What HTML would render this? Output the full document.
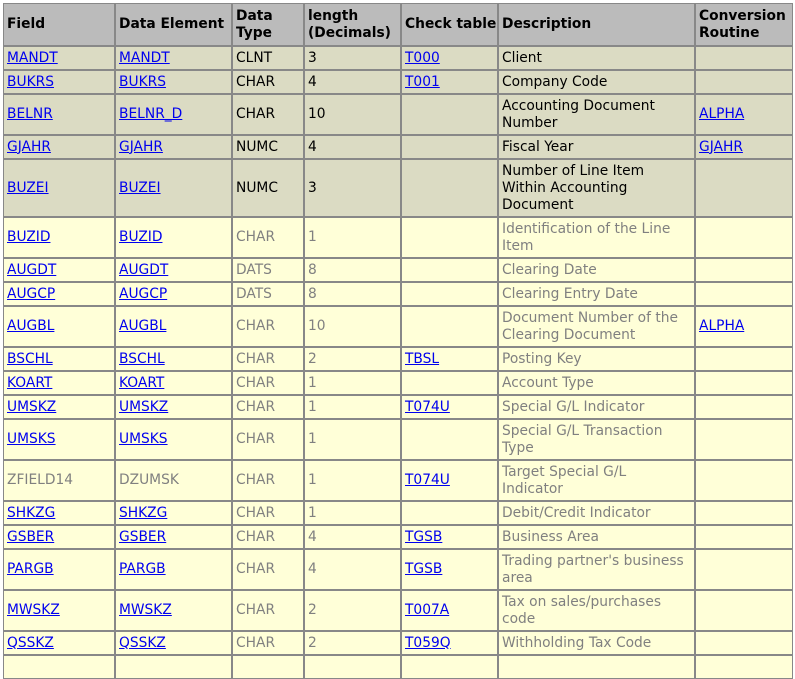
<!DOCTYPE html>
<html><head><meta charset="utf-8"><style>
body{margin:0;padding:3px 0 0 3px;background:#fff;font-family:Verdana,"DejaVu Sans",sans-serif;font-size:13.8px;}
table{border-collapse:separate;border-spacing:0;table-layout:fixed;width:790px;}
td,th{border:1px solid #888;padding:0 3px;text-align:left;vertical-align:middle;line-height:17px;white-space:nowrap;overflow:hidden;}
th{background:#bbb;font-weight:bold;color:#000;}
tr.k td{background:#dbdbc3;color:#000;}
tr.n td{background:#ffffd8;color:#808080;}
a{color:#0000ee;text-decoration:underline;}
</style></head><body>
<table>
<colgroup><col style="width:112px"><col style="width:117px"><col style="width:72px"><col style="width:97px"><col style="width:97px"><col style="width:197px"><col style="width:98px"></colgroup>
<tr style="height:43px"><th>Field</th><th>Data Element</th><th>Data<br>Type</th><th>length<br>(Decimals)</th><th>Check table</th><th>Description</th><th>Conversion<br>Routine</th></tr>
<tr class="k" style="height:24px"><td><a>MANDT</a></td><td><a>MANDT</a></td><td>CLNT</td><td>3</td><td><a>T000</a></td><td>Client</td><td></td></tr>
<tr class="k" style="height:24px"><td><a>BUKRS</a></td><td><a>BUKRS</a></td><td>CHAR</td><td>4</td><td><a>T001</a></td><td>Company Code</td><td></td></tr>
<tr class="k" style="height:41px"><td><a>BELNR</a></td><td><a>BELNR_D</a></td><td>CHAR</td><td>10</td><td></td><td>Accounting Document<br>Number</td><td><a>ALPHA</a></td></tr>
<tr class="k" style="height:24px"><td><a>GJAHR</a></td><td><a>GJAHR</a></td><td>NUMC</td><td>4</td><td></td><td>Fiscal Year</td><td><a>GJAHR</a></td></tr>
<tr class="k" style="height:58px"><td><a>BUZEI</a></td><td><a>BUZEI</a></td><td>NUMC</td><td>3</td><td></td><td>Number of Line Item<br>Within Accounting<br>Document</td><td></td></tr>
<tr class="n" style="height:41px"><td><a>BUZID</a></td><td><a>BUZID</a></td><td>CHAR</td><td>1</td><td></td><td>Identification of the Line<br>Item</td><td></td></tr>
<tr class="n" style="height:24px"><td><a>AUGDT</a></td><td><a>AUGDT</a></td><td>DATS</td><td>8</td><td></td><td>Clearing Date</td><td></td></tr>
<tr class="n" style="height:24px"><td><a>AUGCP</a></td><td><a>AUGCP</a></td><td>DATS</td><td>8</td><td></td><td>Clearing Entry Date</td><td></td></tr>
<tr class="n" style="height:41px"><td><a>AUGBL</a></td><td><a>AUGBL</a></td><td>CHAR</td><td>10</td><td></td><td>Document Number of the<br>Clearing Document</td><td><a>ALPHA</a></td></tr>
<tr class="n" style="height:24px"><td><a>BSCHL</a></td><td><a>BSCHL</a></td><td>CHAR</td><td>2</td><td><a>TBSL</a></td><td>Posting Key</td><td></td></tr>
<tr class="n" style="height:24px"><td><a>KOART</a></td><td><a>KOART</a></td><td>CHAR</td><td>1</td><td></td><td>Account Type</td><td></td></tr>
<tr class="n" style="height:24px"><td><a>UMSKZ</a></td><td><a>UMSKZ</a></td><td>CHAR</td><td>1</td><td><a>T074U</a></td><td>Special G/L Indicator</td><td></td></tr>
<tr class="n" style="height:41px"><td><a>UMSKS</a></td><td><a>UMSKS</a></td><td>CHAR</td><td>1</td><td></td><td>Special G/L Transaction<br>Type</td><td></td></tr>
<tr class="n" style="height:41px"><td>ZFIELD14</td><td>DZUMSK</td><td>CHAR</td><td>1</td><td><a>T074U</a></td><td>Target Special G/L<br>Indicator</td><td></td></tr>
<tr class="n" style="height:24px"><td><a>SHKZG</a></td><td><a>SHKZG</a></td><td>CHAR</td><td>1</td><td></td><td>Debit/Credit Indicator</td><td></td></tr>
<tr class="n" style="height:24px"><td><a>GSBER</a></td><td><a>GSBER</a></td><td>CHAR</td><td>4</td><td><a>TGSB</a></td><td>Business Area</td><td></td></tr>
<tr class="n" style="height:41px"><td><a>PARGB</a></td><td><a>PARGB</a></td><td>CHAR</td><td>4</td><td><a>TGSB</a></td><td>Trading partner's business<br>area</td><td></td></tr>
<tr class="n" style="height:41px"><td><a>MWSKZ</a></td><td><a>MWSKZ</a></td><td>CHAR</td><td>2</td><td><a>T007A</a></td><td>Tax on sales/purchases<br>code</td><td></td></tr>
<tr class="n" style="height:24px"><td><a>QSSKZ</a></td><td><a>QSSKZ</a></td><td>CHAR</td><td>2</td><td><a>T059Q</a></td><td>Withholding Tax Code</td><td></td></tr>
<tr class="n" style="height:24px"><td></td><td></td><td></td><td></td><td></td><td></td><td></td></tr>
</table>
</body></html>
